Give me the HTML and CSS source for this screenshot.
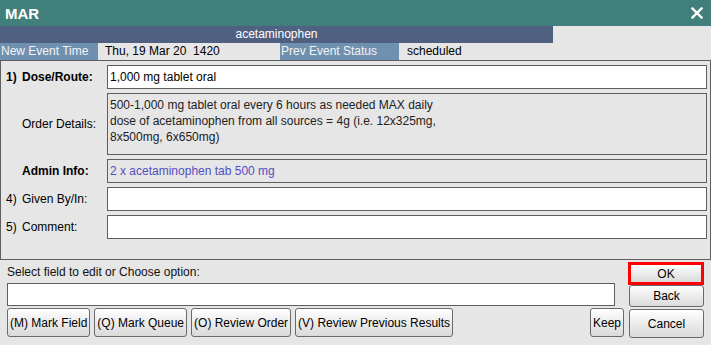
FILE: index.html
```html
<!DOCTYPE html>
<html>
<head>
<meta charset="utf-8">
<link rel="stylesheet" href="styles.css">
</head>
<body>
<div class="titlebar">
  <span class="title">MAR</span>
  <svg class="close" width="12" height="12" viewBox="0 0 12 12"><path d="M1.5 1.5 L10.5 10.5 M10.5 1.5 L1.5 10.5" stroke="#fff" stroke-width="2.4" stroke-linecap="square"/></svg>
</div>
<div class="band"><div class="drug">acetaminophen</div></div>
<div class="inforow">
  <div class="ilabel w1">New Event Time</div>
  <div class="ivalue w2">Thu, 19 Mar 20  1420</div>
  <div class="ilabel w3">Prev Event Status</div>
  <div class="ivalue w4">scheduled</div>
</div>
<div class="panel">
  <div class="frow">
    <div class="flabel bold"><span class="num">1)</span>Dose/Route:</div>
    <div class="field white h24">1,000 mg tablet oral</div>
  </div>
  <div class="frow">
    <div class="flabel center"><span class="num"></span>Order Details:</div>
    <div class="field grey h62 multi">500-1,000 mg tablet oral every 6 hours as needed MAX daily<br>dose of acetaminophen from all sources = 4g (i.e. 12x325mg,<br>8x500mg, 6x650mg)</div>
  </div>
  <div class="frow">
    <div class="flabel bold"><span class="num"></span>Admin Info:</div>
    <div class="field grey h24 blue">2 x acetaminophen tab 500 mg</div>
  </div>
  <div class="frow">
    <div class="flabel"><span class="num">4)</span>Given By/In:</div>
    <div class="field white h24"></div>
  </div>
  <div class="frow">
    <div class="flabel"><span class="num">5)</span>Comment:</div>
    <div class="field white h24"></div>
  </div>
</div>
<div class="bottom">
  <div class="leftcol">
    <div class="prompt">Select field to edit or Choose option:</div>
    <div class="cmdinput"></div>
    <div class="btnrow">
      <button class="btn">(M) Mark Field</button>
      <button class="btn">(Q) Mark Queue</button>
      <button class="btn">(O) Review Order</button>
      <button class="btn">(V) Review Previous Results</button>
      <button class="btn keep">Keep</button>
    </div>
  </div>
  <div class="rightcol">
    <div class="focusring"><button class="btn ok">OK</button></div>
    <button class="btn back">Back</button>
    <button class="btn cancel">Cancel</button>
  </div>
</div>
</body>
</html>
```

FILE: styles.css
```css
html, body {
  margin: 0;
  padding: 0;
  width: 711px;
  height: 345px;
  overflow: hidden;
  background: #e6e6e6;
  font-family: "Liberation Sans", Arial, sans-serif;
  font-size: 12px;
  color: #000;
}
.titlebar {
  height: 26px;
  background: #417f7d;
  display: flex;
  align-items: center;
  justify-content: space-between;
  padding: 0 8px 0 5px;
}
.title {
  color: #fff;
  font-weight: bold;
  font-size: 15px;
}
.close { display: block; }
.band {
  height: 17px;
  display: flex;
}
.drug {
  width: 553px;
  background: #506080;
  color: #fff;
  text-align: center;
  line-height: 17px;
}
.inforow {
  height: 17px;
  display: flex;
  line-height: 17px;
}
.ilabel {
  background: #7090b0;
  color: #f4f4f4;
  padding-left: 1px;
  box-sizing: border-box;
}
.ivalue {
  white-space: pre;
  box-sizing: border-box;
}
.w1 { width: 98px; }
.w2 { width: 182px; padding-left: 7px; }
.w3 { width: 119px; }
.w4 { flex: 1; padding-left: 8px; }
.panel {
  height: 200px;
  box-sizing: border-box;
  border: 1px solid #5f5f5f;
  padding: 4px 3px 0 5px;
  display: flex;
  flex-direction: column;
  gap: 4px;
}
.frow {
  display: flex;
  align-items: center;
}
.flabel {
  width: 101px;
  display: flex;
  align-items: center;
}
.flabel.bold { font-weight: bold; }
.num {
  width: 16px;
  flex: none;
}
.field {
  flex: 1;
  box-sizing: border-box;
  border: 1px solid #5f5f5f;
  padding: 0 2px;
  display: flex;
  align-items: center;
}
.white { background: #fff; }
.grey { background: #e6e6e6; }
.h24 { height: 24px; }
.h62 { height: 62px; }
.multi {
  display: block;
  line-height: 16px;
  padding-top: 3px;
  color: #222;
}
.blue { color: #5050c0; }
.bottom {
  display: flex;
  padding: 0 7px 0 7px;
  gap: 5px;
}
.leftcol {
  flex: 1;
  display: flex;
  flex-direction: column;
}
.prompt {
  height: 23px;
  line-height: 25px;
  color: #111;
}
.cmdinput {
  height: 23px;
  margin-right: 9px;
  box-sizing: border-box;
  border: 1px solid #5f5f5f;
  background: #fff;
}
.btnrow {
  display: flex;
  gap: 4px;
  margin-top: 2px;
}
.btn {
  height: 29px;
  box-sizing: border-box;
  border: 1px solid #6a6a6a;
  border-radius: 3px;
  background: linear-gradient(#ffffff, #e8e8e8 60%, #dadada);
  font-family: "Liberation Sans", Arial, sans-serif;
  font-size: 12px;
  color: #000;
  padding: 0 2px;
  margin: 0;
}
.keep { margin-left: auto; }
.rightcol {
  width: 75px;
  display: flex;
  flex-direction: column;
  padding-top: 2px;
}
.focusring {
  height: 23px;
  box-sizing: border-box;
  border: 3px solid #ff0000;
  margin-left: -1px;
}
.ok {
  width: 100%;
  height: 17px;
  border: none;
  border-radius: 0;
  display: block;
}
.back {
  height: 22px;
  margin-top: 0;
}
.cancel {
  margin-top: 2px;
}
```
